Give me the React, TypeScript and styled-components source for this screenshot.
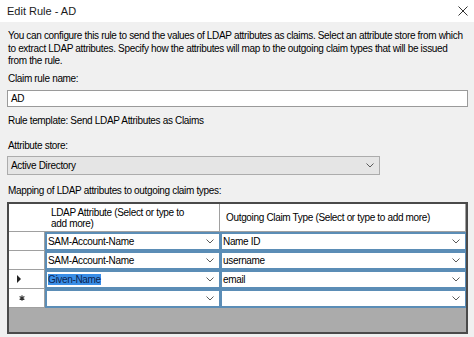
import React from "react";
import styled, { createGlobalStyle } from "styled-components";

const Global = createGlobalStyle`
  html, body { margin: 0; padding: 0; background: #f0f0f0; }
  body { font-family: "Liberation Sans", Arial, sans-serif; font-size: 10px; color: #000; }
  * { box-sizing: border-box; }
`;

const Window = styled.div`
  width: 474px;
  height: 337px;
  display: flex;
  flex-direction: column;
  background: #f0f0f0;
  overflow: hidden;
`;

const TitleBar = styled.div`
  height: 22px;
  background: #fff;
  display: flex;
  align-items: center;
  justify-content: space-between;
  padding: 0 6px 0 7px;
  font-size: 11px;
  color: #1a1a1a;
`;

const Close = styled.svg`
  width: 10px;
  height: 10px;
`;

const Body = styled.div`
  flex: 1;
  display: flex;
  flex-direction: column;
  padding: 8px 6px 0 7px;
  letter-spacing: -0.33px;
`;

const Line = styled.div`
  padding-left: 1px;
  line-height: 12.5px;
  white-space: nowrap;
`;

const Label = styled.div<{ $top: number }>`
  margin-top: ${(p) => p.$top}px;
  padding-left: 1px;
  line-height: 12px;
`;

const TextInput = styled.div`
  margin-top: 5px;
  height: 17px;
  width: 461px;
  background: #fff;
  border: 1px solid #9a9a9a;
  display: flex;
  align-items: center;
  padding-left: 3px;
`;

const Select = styled.div`
  margin-top: 4px;
  height: 19px;
  width: 373px;
  background: #e5e5e5;
  border: 1px solid #acacac;
  display: flex;
  align-items: center;
  justify-content: space-between;
  padding: 0 5px 0 3px;
`;

const Chevron = () => (
  <svg width="8" height="5" viewBox="0 0 8 5">
    <path d="M0.5 0.5 L4 4 L7.5 0.5" fill="none" stroke="#5a5a5a" strokeWidth="1" />
  </svg>
);

const Grid = styled.div`
  margin-top: 5px;
  width: 461px;
  height: 132px;
  border: 2px solid #4a4a4a;
  background: #ababab;
  display: grid;
  grid-template-columns: 36px 175px 1fr;
  grid-template-rows: 28px 19px 19px 19px 19px;
  align-content: start;
`;

const HeadCell = styled.div`
  background: #fff;
  border-right: 1px solid #a0a0a0;
  border-bottom: 1px solid #a0a0a0;
  padding: 2px 30px 0 6px;
  line-height: 11.5px;
  display: flex;
  align-items: center;
`;

const RowHead = styled.div`
  background: #fff;
  border-right: 1px solid #a0a0a0;
  border-bottom: 1px solid #a0a0a0;
  display: flex;
  align-items: center;
  padding-left: 8px;
`;

const Combo = styled.div`
  background: #fff;
  border: 2px solid #5b8db6;
  border-right-width: 1px;
  display: flex;
  align-items: center;
  justify-content: space-between;
  padding: 0 5px 0 1px;
`;

const Selected = styled.span`
  background: #3a8ee6;
  color: #0c2450;
`;

const Arrow = styled.div`
  width: 0;
  height: 0;
  border-top: 4px solid transparent;
  border-bottom: 4px solid transparent;
  border-left: 4px solid #222;
`;

const Star = () => (
  <svg width="6" height="6" viewBox="0 0 6 6" style={{ marginLeft: 2 }}>
    <path d="M3 0.3 V5.7 M0.6 1.6 L5.4 4.4 M5.4 1.6 L0.6 4.4" stroke="#333" strokeWidth="1.1" />
  </svg>
);

const rows: [React.ReactNode, React.ReactNode, string][] = [
  [null, "SAM-Account-Name", "Name ID"],
  [null, "SAM-Account-Name", "username"],
  [<Arrow />, <Selected>Given-Name</Selected>, "email"],
  [<Star />, "", ""],
];

export default function App() {
  return (
    <>
      <Global />
      <Window>
        <TitleBar>
          <span>Edit Rule - AD</span>
          <Close viewBox="0 0 10 10">
            <path d="M0.5 0.5 L9.5 9.5 M9.5 0.5 L0.5 9.5" stroke="#333" strokeWidth="1" />
          </Close>
        </TitleBar>
        <Body>
          <Line>You can configure this rule to send the values of LDAP attributes as claims. Select an attribute store from which</Line>
          <Line>to extract LDAP attributes. Specify how the attributes will map to the outgoing claim types that will be issued</Line>
          <Line>from the rule.</Line>
          <Label $top={5}>Claim rule name:</Label>
          <TextInput>AD</TextInput>
          <Label $top={8}>Rule template: Send LDAP Attributes as Claims</Label>
          <Label $top={13}>Attribute store:</Label>
          <Select>
            <span>Active Directory</span>
            <Chevron />
          </Select>
          <Label $top={10}>Mapping of LDAP attributes to outgoing claim types:</Label>
          <Grid>
            <HeadCell />
            <HeadCell>LDAP Attribute (Select or type to add more)</HeadCell>
            <HeadCell>Outgoing Claim Type (Select or type to add more)</HeadCell>
            {rows.map((r, i) => (
              <React.Fragment key={i}>
                <RowHead>{r[0]}</RowHead>
                <Combo>
                  <span>{r[1]}</span>
                  <Chevron />
                </Combo>
                <Combo>
                  <span>{r[2]}</span>
                  <Chevron />
                </Combo>
              </React.Fragment>
            ))}
          </Grid>
        </Body>
      </Window>
    </>
  );
}
